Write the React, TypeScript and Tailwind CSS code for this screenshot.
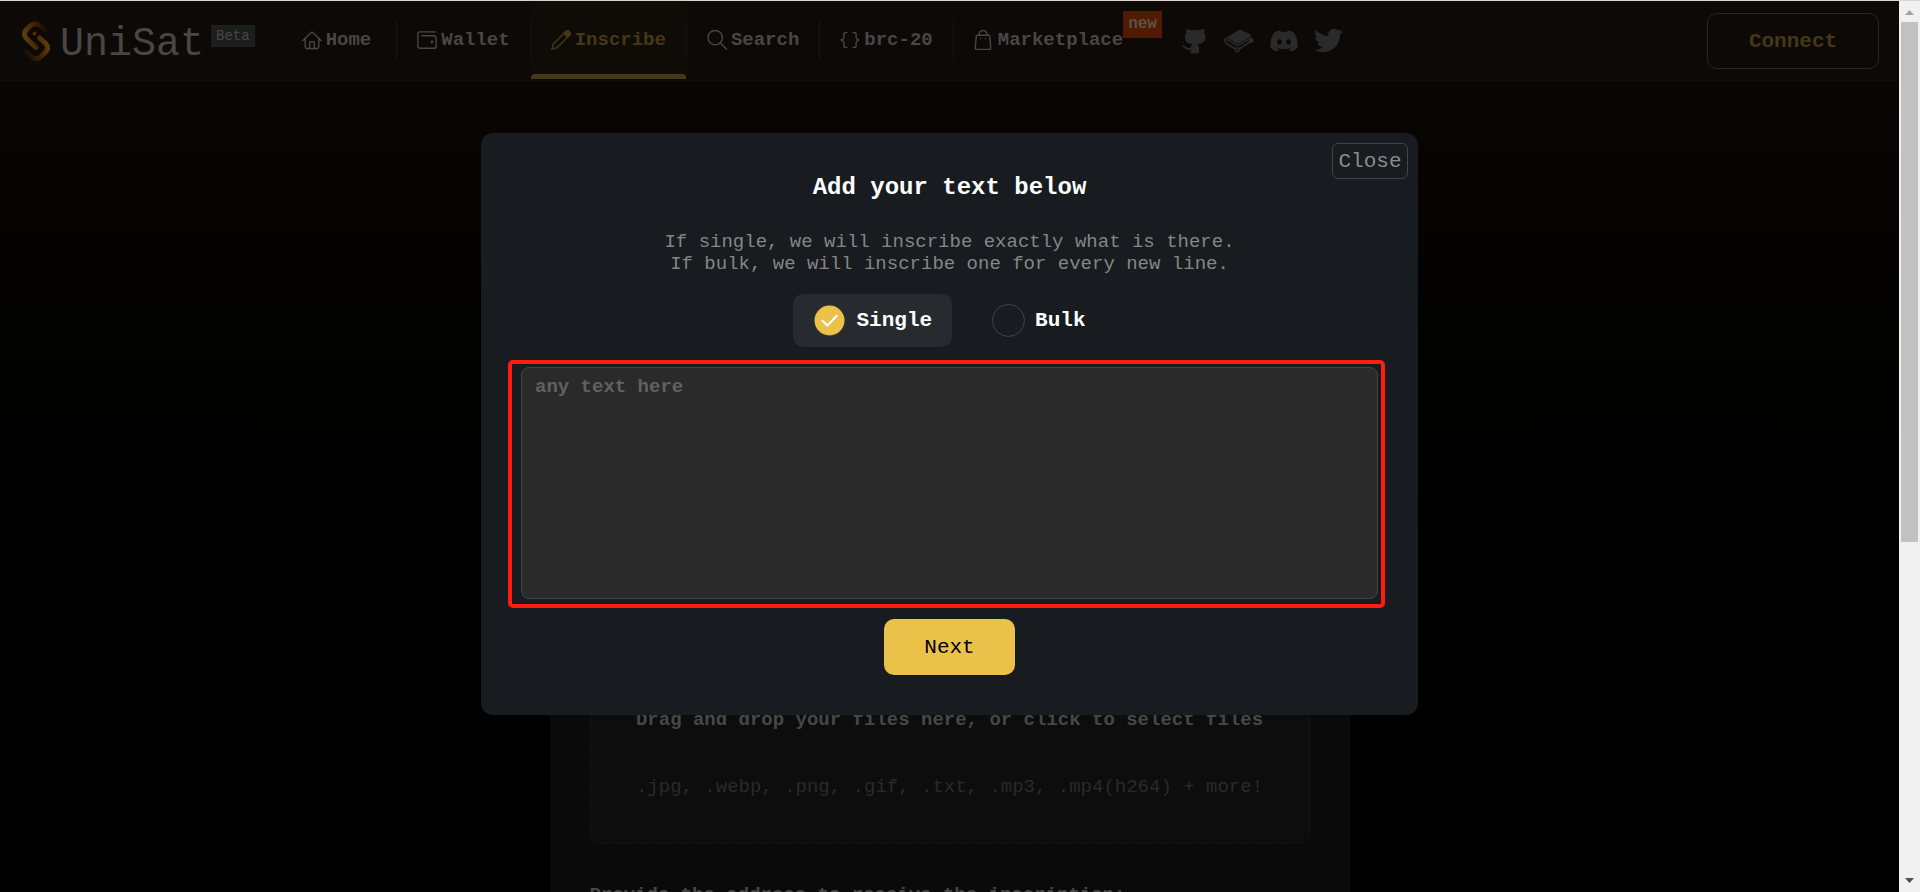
import { useState } from 'react';
import type { ReactNode } from 'react';
import { FaDiscord, FaTwitter } from 'react-icons/fa';

function LogoMark() {
  return (
    <svg viewBox="0 0 30 42" className="h-[42px] w-[30px]" fill="none" strokeLinecap="round" strokeWidth="5" aria-hidden="true">
      <defs>
        <linearGradient id="upper" x1="4" y1="16" x2="27" y2="10" gradientUnits="userSpaceOnUse">
          <stop offset="0" stopColor="#59390e" />
          <stop offset="0.5" stopColor="#422105" />
          <stop offset="1" stopColor="#0d0a07" />
        </linearGradient>
        <linearGradient id="lower" x1="27" y1="24" x2="3" y2="34" gradientUnits="userSpaceOnUse">
          <stop offset="0" stopColor="#5e3d08" />
          <stop offset="0.5" stopColor="#3f1f05" />
          <stop offset="1" stopColor="#0d0a07" />
        </linearGradient>
      </defs>
      <path stroke="url(#upper)" d="M25 10 20 6Q14 1.500 9 6L5.500 9.500Q1.500 14 5.500 18.500L15 27.500" />
      <path stroke="url(#lower)" d="M18.500 18 24.500 23.500Q28.500 28 24.500 32L20 36.500Q15 41 10 36.500L5 32" />
      <circle cx="13.500" cy="13.500" r="2" fill="#54300a" />
    </svg>
  );
}

function Glyph({ children }: { children: ReactNode }) {
  return (
    <svg viewBox="0 0 20 20" className="size-5 shrink-0" fill="none" stroke="currentColor" strokeWidth="1.4" strokeLinecap="round" strokeLinejoin="round" aria-hidden="true">
      {children}
    </svg>
  );
}

const items: { label: string; active?: boolean; badge?: string; icon: ReactNode }[] = [
  {
    label: 'Home',
    icon: (
      <Glyph>
        <path d="M.8 10.6 10 2l9.2 8.6M3.2 8.8v7.7q0 2 2 2h9.6q2 0 2-2V8.8M7.6 18.3v-5.2q0-1.3 1.3-1.3h2.2q1.3 0 1.3 1.3v5.2" />
      </Glyph>
    ),
  },
  {
    label: 'Wallet',
    icon: (
      <Glyph>
        <path d="M18.3 1.9H2.8Q.9 1.9.9 3.8v12.1q0 2.4 2.4 2.4h13.4q2.4 0 2.4-2.4V8.1q0-2.4-2.4-2.4H4.8" />
        <circle cx="15" cy="12" r=".7" fill="currentColor" />
      </Glyph>
    ),
  },
  {
    label: 'Inscribe',
    active: true,
    icon: (
      <Glyph>
        <path d="M.9 19.1 2.3 14 14.6 1.7q2-1.600 3.700 0t0 3.700L6 17.700Z" />
        <path fill="currentColor" d="m13 3.400 1.600-1.700q2-1.600 3.700 0t0 3.700L16.600 7Z" />
      </Glyph>
    ),
  },
  {
    label: 'Search',
    icon: (
      <Glyph>
        <circle cx="8.200" cy="7.700" r="7.200" />
        <path d="m13.400 12.900 6 6" />
      </Glyph>
    ),
  },
  {
    label: 'brc-20',
    icon: (
      <Glyph>
        <path d="M6.8 2.500h-.9q-2 0-2 2v2.700q0 1.700-2.800 2.800 2.800 1.100 2.800 2.800v2.700q0 2 2 2h.9M13.200 2.500h.9q2 0 2 2v2.700q0 1.700 2.800 2.800-2.800 1.100-2.800 2.800v2.700q0 2-2 2h-.9" />
      </Glyph>
    ),
  },
  {
    label: 'Marketplace',
    badge: 'new',
    icon: (
      <Glyph>
        <path d="M3.600 5.300h10.800q1.300 0 1.400 1.300l.9 11.400q.1 1.500-1.400 1.500H2.700q-1.500 0-1.400-1.500l.9-11.400q.1-1.300 1.400-1.300ZM4.700 5.200Q5.300.5 9 .5t4.300 4.700M6.600 8.600v.2M11.400 8.600v.2" />
      </Glyph>
    ),
  },
];

function NavItem({ label, active, badge, icon }: (typeof items)[number]) {
  return (
    <li className="flex items-center first:gap-[5px]">
      <a
        href="#"
        aria-current={active ? 'page' : undefined}
        className={`relative flex h-full items-center gap-1 px-5 font-bold ${active ? 'bg-[#0f0c08] text-[#463816]' : 'text-[#484746]'}`}
      >
        {icon}
        <span>{label}</span>
        {badge && (
          <span className="absolute top-[10px] left-full -ml-5 bg-[#501b00] px-[5px] py-[3px] text-[16px] leading-[21px] text-[#5d5148]">{badge}</span>
        )}
        {active && <span className="absolute inset-x-0 bottom-0 h-[5px] rounded-t bg-[#463816]" />}
      </a>
      {!badge && <span className="h-10 w-px bg-[#131516]" />}
    </li>
  );
}

function Header() {
  return (
    <header className="flex h-20 border-b border-[#0e0d09] bg-[#0c0907]">
      <a href="#" className="flex items-center pl-[21px]">
        <LogoMark />
        <span className="pt-2 pl-[9px] text-[40px] leading-none text-[#484746]">UniSat</span>
        <span className="mb-[10px] ml-[7px] bg-[#1c1d1d] px-[5px] text-[14px] leading-[22px] text-[#484746]">Beta</span>
      </a>
      <nav aria-label="Main" className="ml-[27px] pb-px">
        <ul className="flex h-full">
          {items.map((item) => (
            <NavItem key={item.label} {...item} />
          ))}
        </ul>
      </nav>
      <div className="ml-9 flex items-center gap-[15px] text-[#2a2a2b]">
        <a href="#" aria-label="GitHub" className="flex w-[30px] justify-center">
          <svg viewBox="1 1 20.5 22" className="h-[26px] w-6" fill="currentColor" aria-hidden="true">
            <path d="M15.500 22.500v-4.500a4.800 4.800 0 0 0-1-3.500c3 0 6.500-1.500 6.500-5.500.08-1.250-.27-2.480-1-3.500.28-1.150.28-2.650 0-4 0 0-1.500.2-4 1.500-2.640-.5-4.860-.5-7.500 0C6 1.500 5 1.500 4.800 1.500c-.3 1.350-.3 2.850 0 4A5.400 5.400 0 0 0 3.500 9c0 4 3.500 5.500 6.500 5.500-.8.700-1.500 1.800-1.500 3.500v4.500Z" />
            <path d="M9 18.500c-4.500 2-5-2-7-2" fill="none" stroke="currentColor" strokeWidth="1.8" strokeLinecap="round" />
          </svg>
        </a>
        <a href="#" aria-label="GitBook">
          <svg viewBox="0 0 30 24" className="h-6 w-[30px]" fill="none" stroke="currentColor" strokeLinejoin="round" aria-hidden="true">
            <path fill="currentColor" stroke="none" d="M2.500 8.500 15 1q1-.6 2.200 0L27 5.800q1 .7 0 1.500L14.800 14.200q-1.200.6-2.400 0Z" />
            <path strokeWidth="2" d="M2.500 8.800Q1 10 1.200 12t2 3l8.300 4.800M15 20 26.500 12.500" />
            <path strokeWidth="1.600" d="M3 10.500 12.400 16q1.100.6 2.200 0L27.500 8.500" />
            <circle cx="13.200" cy="20.800" r="1.900" strokeWidth="1.600" />
            <circle cx="27.200" cy="11.500" r="2.400" fill="currentColor" stroke="none" />
          </svg>
        </a>
        <a href="#" aria-label="Discord"><FaDiscord className="size-[30px]" /></a>
        <a href="#" aria-label="Twitter"><FaTwitter className="size-[29px]" /></a>
      </div>
      <button type="button" className="mr-5 ml-auto h-14 w-[172px] self-center rounded-[10px] border border-[#26282a] pt-0.5 text-[21px] font-bold text-[#463816]">
        Connect
      </button>
    </header>
  );
}

function UploadPage() {
  return (
    <main className="mx-auto mt-[542px] w-[800px] max-w-full rounded-[10px] bg-[#0a0a0a] p-10 pb-24">
      <div className="rounded-[10px] border border-dashed border-[#161616] bg-[#0d0d0d] py-[45px] text-center">
        <p className="font-bold text-[#474747]">Drag and drop your files here, or click to select files</p>
        <p className="mt-[45px] text-[#2a2a2a]">.jpg, .webp, .png, .gif, .txt, .mp3, .mp4(h264) + more!</p>
      </div>
      <p className="mt-10 font-bold text-[#474747]">Provide the address to receive the inscription:</p>
    </main>
  );
}

function ModeOption({ label, checked, onSelect }: { label: string; checked: boolean; onSelect: () => void }) {
  return (
    <label className={`flex h-[53px] cursor-pointer items-center gap-[10px] rounded-[10px] px-5 text-[21px] font-bold text-white ${checked ? 'bg-[#272a2e]' : ''}`}>
      <input type="radio" name="mode" checked={checked} onChange={onSelect} className="sr-only" />
      <span className={`flex size-[33px] items-center justify-center rounded-full border ${checked ? 'border-[#2f3032]' : 'border-[#424446]'}`}>
        {checked && (
          <svg viewBox="0 0 31 31" className="size-[31px]" fill="none" aria-hidden="true">
            <circle cx="15.500" cy="15.500" r="15" fill="#eac249" />
            <path d="m8.500 15.800 4.800 4.700 9.300-9.500" stroke="#fff" strokeWidth="2.200" strokeLinecap="round" strokeLinejoin="round" />
          </svg>
        )}
      </span>
      {label}
    </label>
  );
}

function TextDialog() {
  const [mode, setMode] = useState('Single');
  return (
    <section role="dialog" aria-labelledby="dialog-title" className="relative flex w-[937px] max-w-full flex-col items-center rounded-xl bg-[#181b1f] p-10">
      <button type="button" className="absolute top-[10px] right-[10px] h-9 w-[76px] rounded-md border border-[#424446] pt-0.5 text-[21px] text-[#8c8c8b]">
        Close
      </button>
      <h2 id="dialog-title" className="text-[24px] leading-[30px] font-bold text-white">Add your text below</h2>
      <p className="mt-7 text-center text-[#868685]">
        If single, we will inscribe exactly what is there.
        <br />
        If bulk, we will inscribe one for every new line.
      </p>
      <div role="radiogroup" aria-label="Mode" className="mt-[19px] flex gap-5">
        <ModeOption label="Single" checked={mode === 'Single'} onSelect={() => setMode('Single')} />
        <ModeOption label="Bulk" checked={mode === 'Bulk'} onSelect={() => setMode('Bulk')} />
      </div>
      <div className="relative mt-5 w-full">
        <textarea
          aria-label="Text to inscribe"
          placeholder="any text here"
          className="block h-[232px] w-full resize-none rounded-lg border border-[#424446] bg-[#2a2a2a] px-[13px] py-2 font-bold text-white outline-none placeholder:text-[#616161]"
        />
        <div className="pointer-events-none absolute -top-[7px] -right-[7px] -bottom-[9px] -left-[13px] rounded-[5px] border-4 border-[#ff1d10]" />
      </div>
      <button type="button" className="mt-5 h-14 w-[131px] rounded-[10px] bg-[#eac249] pt-0.5 text-[21px] text-black">Next</button>
    </section>
  );
}

function Scrollbar() {
  return (
    <div aria-hidden="true" className="flex w-[21px] shrink-0 flex-col items-center bg-[#f1f1f1] py-[9px]">
      <svg viewBox="0 0 9 5" className="mb-[7px] h-[5px] w-[9px]"><path d="M0 5 4.500 0 9 5Z" fill="#a3a3a3" /></svg>
      <div className="h-[520px] w-[17px] bg-[#c1c1c1]" />
      <svg viewBox="0 0 9 5" className="mt-auto h-[5px] w-[9px]"><path d="M0 0 4.500 5 9 0Z" fill="#505050" /></svg>
    </div>
  );
}

export default function App() {
  return (
    <div className="flex h-screen flex-col overflow-hidden border-t border-[#dfd2d0] bg-black font-['Liberation_Mono',monospace] text-[19px] leading-[22px]">
      <div className="flex min-h-0 flex-1">
        <div className="relative min-w-0 flex-1 overflow-hidden bg-linear-to-b from-[#0c0a06] to-black to-85%">
          <Header />
          <UploadPage />
          <div className="absolute inset-x-0 top-[132px] flex justify-center">
            <TextDialog />
          </div>
        </div>
        <Scrollbar />
      </div>
    </div>
  );
}
